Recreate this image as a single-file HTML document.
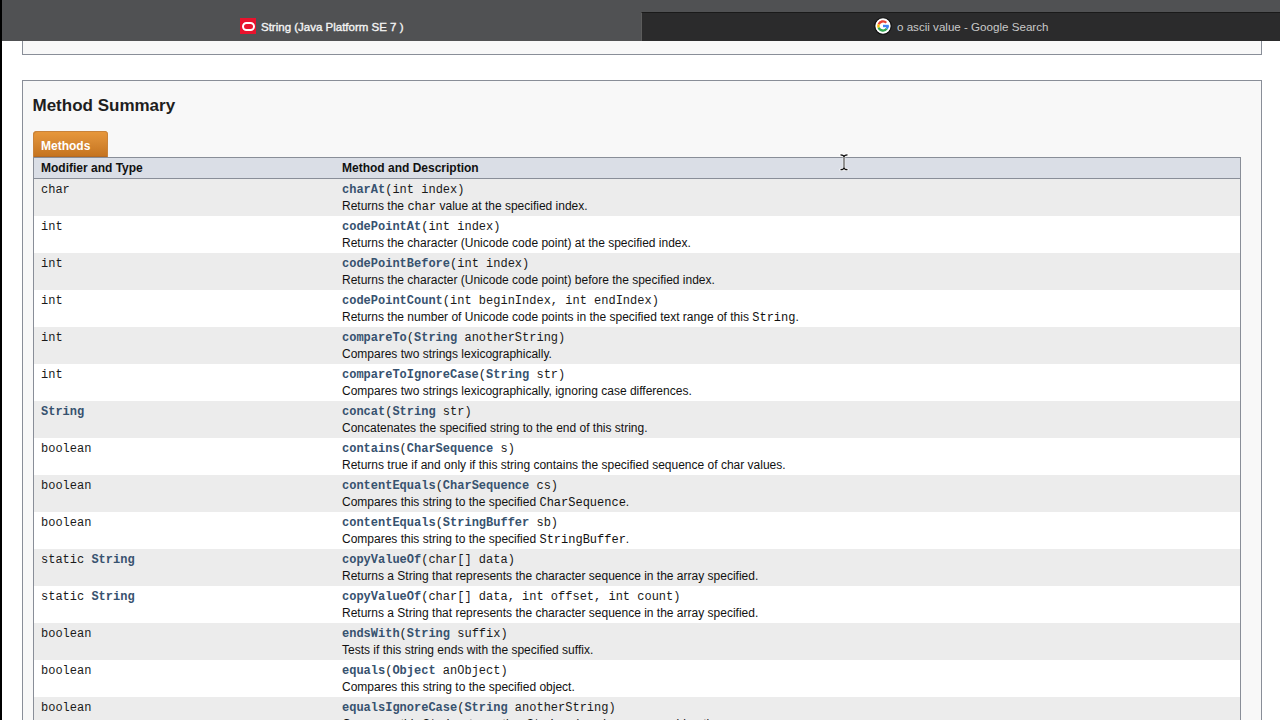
<!DOCTYPE html>
<html><head><meta charset="utf-8"><style>
*{box-sizing:border-box}
html,body{margin:0;padding:0}
body{width:1280px;height:720px;overflow:hidden;position:relative;background:#fff;font-family:"Liberation Sans",sans-serif;color:#111}
#bar{position:absolute;z-index:5;left:0;top:0;width:1280px;height:41px;background:#505153}
#tab2{position:absolute;left:641px;top:12px;width:639px;height:29px;background:#2b2b2c;border-top:1px solid #1a1a1a;border-left:1px solid #5c5c5c}
#ico1{position:absolute;left:240px;top:18px;width:16px;height:16px;background:#e8132d}
#ico1 div{position:absolute;left:1.5px;top:4px;width:13px;height:9px;border:2px solid #fff;border-radius:4.5px}
#t1{position:absolute;left:261px;top:20px;font-size:11.5px;line-height:14px;color:#f4f4f4;-webkit-text-stroke:0.35px #f4f4f4;white-space:nowrap}
#gico{position:absolute;left:874.4px;top:17.2px}
#t2{position:absolute;left:897px;top:20px;font-size:11.6px;line-height:14px;color:#c9c9c9;white-space:nowrap}
#strip{position:absolute;z-index:6;left:0;top:0;width:2px;height:720px;background:#000}
#box1{position:absolute;left:22px;top:-10px;width:1240px;height:65px;border:1px solid #898e98;background:#f8f8f8}
#box2{position:absolute;left:22px;top:80px;width:1240px;height:700px;border:1px solid #898e98;background:#f8f8f8}
#h3{position:absolute;left:9.5px;top:15px;font-size:17px;font-weight:bold;line-height:20px;color:#1e1e1e;white-space:nowrap}
#mtab{position:absolute;left:10px;top:50px;width:75px;height:26px;border-radius:4px 4px 0 0;background:linear-gradient(#e8983c,#d98a33 40%,#c4731f);box-shadow:inset 1px 1px 0 #c9833a,inset -1px 0 0 #c9833a,inset 0 -1px 0 #b46a24;color:#fff;font-weight:bold;font-size:12px;line-height:14px;padding:8px 0 0 8px}
#table{position:absolute;left:10px;top:76px;width:1208px;height:700px;border-left:1px solid #898e98;border-right:1px solid #898e98}
#hdr{position:absolute;left:0;top:0;width:1206px;height:22px;background:#dadee6;border-top:1px solid #898e98;border-bottom:1px solid #898e98;font-weight:bold;font-size:12px}
#hdr .c1{position:absolute;left:7px;top:3px;line-height:14px}
#hdr .c2{position:absolute;left:308px;top:3px;line-height:14px}
.r{position:absolute;left:0;width:1206px;height:37px;font-size:12px}

.alt{background:#ececec}
.row{background:#fff}
.r .c1,.r .c2{position:absolute;top:4px;font-family:"Liberation Mono",monospace;font-size:12px;line-height:14px;white-space:nowrap;color:#1a1a1a}
.r .c1{left:7px}
.r .c2{left:308px}
.r b{color:#37526f;font-weight:bold}
.r .d{position:absolute;left:308px;top:20px;font-size:12px;line-height:14px;white-space:nowrap;color:#111}
.r .d code{font-family:"Liberation Mono",monospace;font-size:12px}
#cursor{position:absolute;left:838px;top:152px}

</style></head><body>
<div id="bar">
  <div id="tab2"></div>
  <div id="ico1"><div></div></div>
  <div id="t1">String (Java Platform SE 7 )</div>
  <svg id="gico" width="18" height="18" viewBox="0 0 18 18">
    <circle cx="9" cy="9" r="8.2" fill="#fff" stroke="#0a0a0a" stroke-width="1.1"/>
    <g fill="none" stroke-width="2.4">
    <path d="M12.25 5.75 A4.6 4.6 0 0 0 4.68 7.43" stroke="#ea4335"/>
    <path d="M4.68 7.43 A4.6 4.6 0 0 0 4.68 10.57" stroke="#fbbc05"/>
    <path d="M4.68 10.57 A4.6 4.6 0 0 0 12.77 11.64" stroke="#34a853"/>
    <path d="M12.77 11.64 A4.6 4.6 0 0 0 13.6 9" stroke="#4285f4"/>
    </g>
    <rect x="9" y="7.8" width="5.8" height="2.4" fill="#4285f4"/>
  </svg>
  <div id="t2">o ascii value - Google Search</div>
</div>
<div id="strip"></div>
<div id="box1"></div>
<div id="box2">
  <div id="h3">Method Summary</div>
  <div id="mtab">Methods</div>
  <div id="table">
    <div id="hdr"><div class="c1">Modifier and Type</div><div class="c2">Method and Description</div></div>
    <div class="r alt" style="top:22px"><div class="c1">char</div><div class="c2"><b>charAt</b>(int index)</div><div class="d">Returns the <code>char</code> value at the specified index.</div></div><div class="r row" style="top:59px"><div class="c1">int</div><div class="c2"><b>codePointAt</b>(int index)</div><div class="d">Returns the character (Unicode code point) at the specified index.</div></div><div class="r alt" style="top:96px"><div class="c1">int</div><div class="c2"><b>codePointBefore</b>(int index)</div><div class="d">Returns the character (Unicode code point) before the specified index.</div></div><div class="r row" style="top:133px"><div class="c1">int</div><div class="c2"><b>codePointCount</b>(int beginIndex, int endIndex)</div><div class="d">Returns the number of Unicode code points in the specified text range of this <code>String</code>.</div></div><div class="r alt" style="top:170px"><div class="c1">int</div><div class="c2"><b>compareTo</b>(<b>String</b> anotherString)</div><div class="d">Compares two strings lexicographically.</div></div><div class="r row" style="top:207px"><div class="c1">int</div><div class="c2"><b>compareToIgnoreCase</b>(<b>String</b> str)</div><div class="d">Compares two strings lexicographically, ignoring case differences.</div></div><div class="r alt" style="top:244px"><div class="c1"><b>String</b></div><div class="c2"><b>concat</b>(<b>String</b> str)</div><div class="d">Concatenates the specified string to the end of this string.</div></div><div class="r row" style="top:281px"><div class="c1">boolean</div><div class="c2"><b>contains</b>(<b>CharSequence</b> s)</div><div class="d">Returns true if and only if this string contains the specified sequence of char values.</div></div><div class="r alt" style="top:318px"><div class="c1">boolean</div><div class="c2"><b>contentEquals</b>(<b>CharSequence</b> cs)</div><div class="d">Compares this string to the specified <code>CharSequence</code>.</div></div><div class="r row" style="top:355px"><div class="c1">boolean</div><div class="c2"><b>contentEquals</b>(<b>StringBuffer</b> sb)</div><div class="d">Compares this string to the specified <code>StringBuffer</code>.</div></div><div class="r alt" style="top:392px"><div class="c1">static <b>String</b></div><div class="c2"><b>copyValueOf</b>(char[] data)</div><div class="d">Returns a String that represents the character sequence in the array specified.</div></div><div class="r row" style="top:429px"><div class="c1">static <b>String</b></div><div class="c2"><b>copyValueOf</b>(char[] data, int offset, int count)</div><div class="d">Returns a String that represents the character sequence in the array specified.</div></div><div class="r alt" style="top:466px"><div class="c1">boolean</div><div class="c2"><b>endsWith</b>(<b>String</b> suffix)</div><div class="d">Tests if this string ends with the specified suffix.</div></div><div class="r row" style="top:503px"><div class="c1">boolean</div><div class="c2"><b>equals</b>(<b>Object</b> anObject)</div><div class="d">Compares this string to the specified object.</div></div><div class="r alt" style="top:540px"><div class="c1">boolean</div><div class="c2"><b>equalsIgnoreCase</b>(<b>String</b> anotherString)</div><div class="d">Compares this <code>String</code> to another <code>String</code>, ignoring case considerations.</div></div>
  </div>
</div>
<svg id="cursor" width="12" height="20" viewBox="0 0 12 20"><path d="M2.5 2.8 Q6 2.8 6 5 M9.5 2.8 Q6 2.8 6 5 M2.5 17.6 Q6 17.6 6 15.4 M9.5 17.6 Q6 17.6 6 15.4 M6 5 V15.4" fill="none" stroke="#fff" stroke-width="2.4" stroke-linecap="round" opacity="0.9"/><path d="M2.5 2.8 Q6 2.8 6 5 M9.5 2.8 Q6 2.8 6 5 M2.5 17.6 Q6 17.6 6 15.4 M9.5 17.6 Q6 17.6 6 15.4" fill="none" stroke="#111" stroke-width="1.2"/><path d="M6 4.6 V15.8" stroke="#3a3a3a" stroke-width="1.1"/></svg>
</body></html>
